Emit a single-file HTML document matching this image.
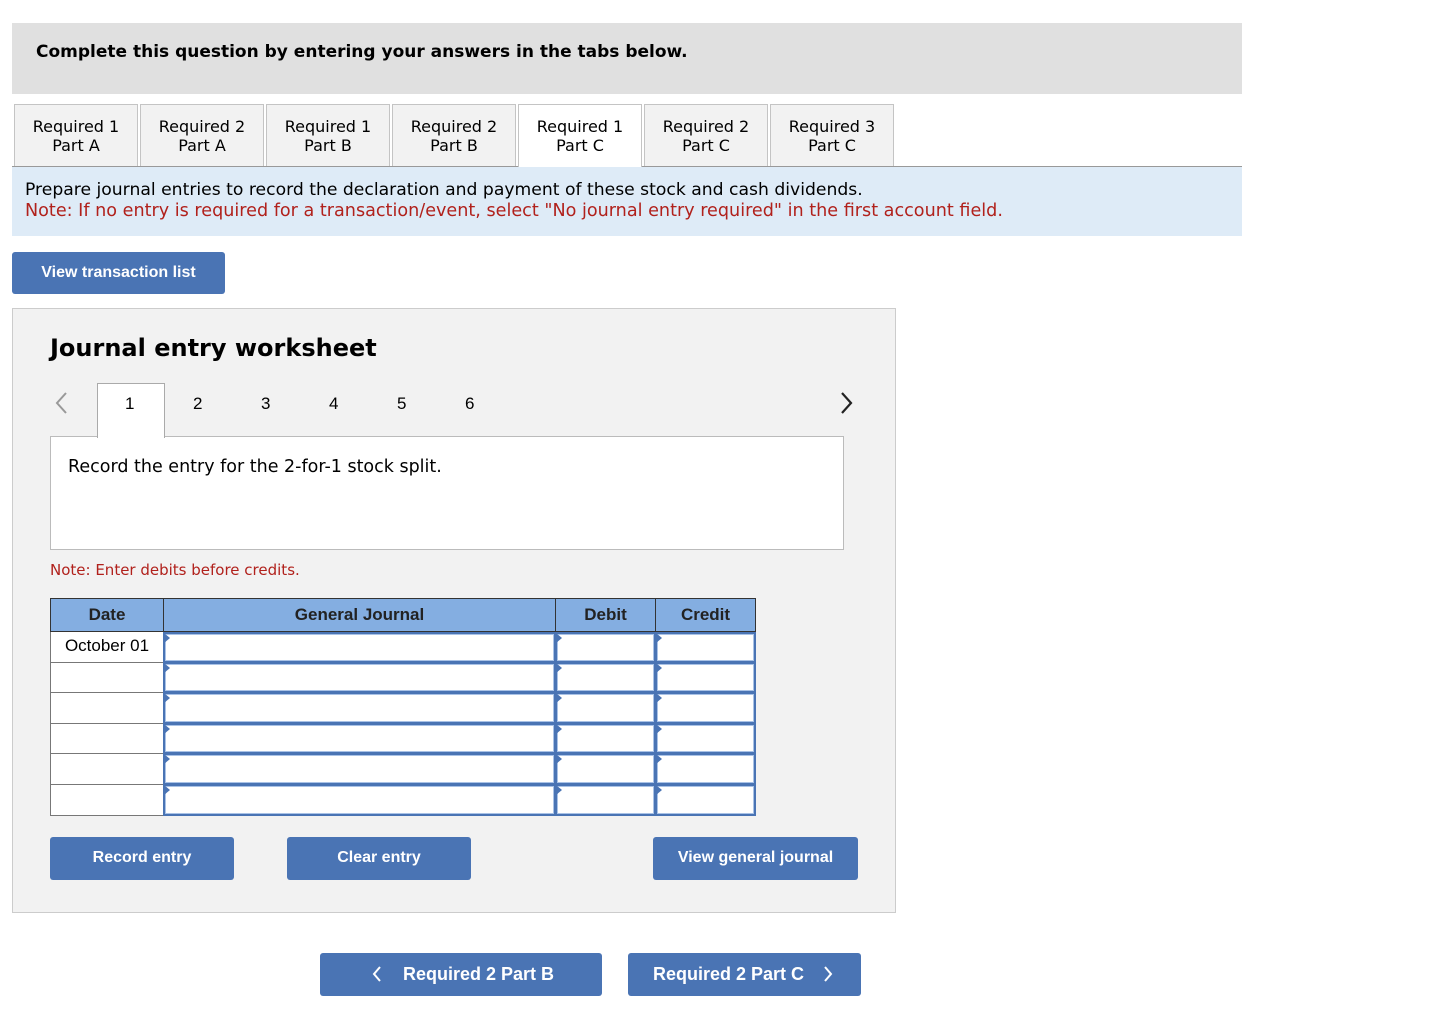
<!DOCTYPE html>
<html><head><meta charset="utf-8"><style>
*{box-sizing:border-box;margin:0;padding:0}
body{width:1440px;height:1020px;background:#fff;position:relative;font-family:"DejaVu Sans",Verdana,sans-serif;color:#000;overflow:hidden}
.a{position:absolute}
.hdr{left:12px;top:23px;width:1230px;height:71px;background:#e0e0e0;font-weight:bold;font-size:17px;padding:19px 0 0 24px}
.tab{top:104px;width:124px;height:62px;background:#f2f2f2;border:1px solid #c4c4c4;border-bottom:none;text-align:center;font-size:16px;line-height:19px;padding-top:12px}
.tab.on{background:#fff;height:63px;z-index:2}
.tabline{left:12px;top:166px;width:1230px;height:1px;background:#999}
.info{left:12px;top:167px;width:1230px;height:69px;background:#deebf7;font-size:17.2px;padding:13px 0 0 13px;line-height:21px}
.red{color:#b1211c}
.btn{background:#4a74b4;color:#fff;font-family:"Liberation Sans",Arial,sans-serif;font-weight:bold;font-size:16px;text-align:center;border-radius:3px}
.ws{left:12px;top:308px;width:884px;height:605px;background:#f2f2f2;border:1px solid #ccc}
.num{top:393px;font-family:"Liberation Sans",Arial,sans-serif;font-size:17px}
.cell{position:absolute;border:2px solid #4a74b4;background:#fff}
.cell:after{content:"";position:absolute;left:0;top:0;right:0;bottom:0;border:1px solid #a9c2e6}
.cell:before{content:"";position:absolute;left:-1px;top:-1px;border-left:6px solid #4a74b4;border-top:5px solid transparent;border-bottom:5px solid transparent;z-index:1}
.th{position:absolute;top:598px;height:34px;background:#84aee1;border:1px solid #333;font-family:"Liberation Sans",Arial,sans-serif;font-weight:bold;font-size:17px;color:#222;text-align:center;line-height:31px}
.dc{position:absolute;left:50px;width:114px;height:31px;background:#fff;border:1px solid #777;border-bottom:none;font-family:"Liberation Sans",Arial,sans-serif;font-size:17px;text-align:center;line-height:28px}
</style></head><body>
<div class="a hdr">Complete this question by entering your answers in the tabs below.</div>
<div class="a tab" style="left:14px">Required 1<br>Part A</div>
<div class="a tab" style="left:140px">Required 2<br>Part A</div>
<div class="a tab" style="left:266px">Required 1<br>Part B</div>
<div class="a tab" style="left:392px">Required 2<br>Part B</div>
<div class="a tab on" style="left:518px">Required 1<br>Part C</div>
<div class="a tab" style="left:644px">Required 2<br>Part C</div>
<div class="a tab" style="left:770px">Required 3<br>Part C</div>
<div class="a tabline"></div>
<div class="a info">Prepare journal entries to record the declaration and payment of these stock and cash dividends.<br><span class="red" style="font-size:17.6px">Note: If no entry is required for a transaction/event, select "No journal entry required" in the first account field.</span></div>
<div class="a btn" style="left:12px;top:252px;width:213px;height:42px;line-height:42px">View transaction list</div>
<div class="a ws"></div>
<div class="a" style="left:50px;top:334px;font-weight:bold;font-size:24px">Journal entry worksheet</div>
<svg class="a" style="left:54px;top:392px" width="14" height="22"><path d="M12 1 L3 11 L12 21" stroke="#999" stroke-width="2" fill="none"/></svg>
<svg class="a" style="left:840px;top:392px" width="14" height="22"><path d="M2 1 L11 11 L2 21" stroke="#222" stroke-width="2.2" fill="none"/></svg>
<div class="a" style="left:50px;top:436px;width:794px;height:114px;background:#fff;border:1px solid #bbb"></div>
<div class="a" style="left:97px;top:383px;width:68px;height:55px;background:#fff;border:1px solid #aaa;border-bottom:none"></div>
<div class="a num" style="left:125px;top:394px">1</div>
<div class="a num" style="left:193px;top:394px">2</div>
<div class="a num" style="left:261px;top:394px">3</div>
<div class="a num" style="left:329px;top:394px">4</div>
<div class="a num" style="left:397px;top:394px">5</div>
<div class="a num" style="left:465px;top:394px">6</div>
<div class="a" style="left:68px;top:457px;font-size:17.5px">Record the entry for the 2-for-1 stock split.</div>
<div class="a red" style="left:50px;top:561px;font-size:15px">Note: Enter debits before credits.</div>
<div class="th" style="left:50px;width:114px">Date</div>
<div class="th" style="left:163px;width:393px">General Journal</div>
<div class="th" style="left:555px;width:101px">Debit</div>
<div class="th" style="left:655px;width:101px">Credit</div>
<div class="dc" style="top:632px;border-top:none">October 01</div>
<div class="dc" style="top:662px"></div>
<div class="dc" style="top:692px"></div>
<div class="dc" style="top:723px"></div>
<div class="dc" style="top:753px"></div>
<div class="dc" style="top:784px;height:32px;border-bottom:1px solid #777"></div>
<div class="cell" style="left:163px;top:632px;width:393px;height:31px"></div>
<div class="cell" style="left:555px;top:632px;width:101px;height:31px"></div>
<div class="cell" style="left:655px;top:632px;width:101px;height:31px"></div>
<div class="cell" style="left:163px;top:662px;width:393px;height:31px"></div>
<div class="cell" style="left:555px;top:662px;width:101px;height:31px"></div>
<div class="cell" style="left:655px;top:662px;width:101px;height:31px"></div>
<div class="cell" style="left:163px;top:692px;width:393px;height:32px"></div>
<div class="cell" style="left:555px;top:692px;width:101px;height:32px"></div>
<div class="cell" style="left:655px;top:692px;width:101px;height:32px"></div>
<div class="cell" style="left:163px;top:723px;width:393px;height:31px"></div>
<div class="cell" style="left:555px;top:723px;width:101px;height:31px"></div>
<div class="cell" style="left:655px;top:723px;width:101px;height:31px"></div>
<div class="cell" style="left:163px;top:753px;width:393px;height:32px"></div>
<div class="cell" style="left:555px;top:753px;width:101px;height:32px"></div>
<div class="cell" style="left:655px;top:753px;width:101px;height:32px"></div>
<div class="cell" style="left:163px;top:784px;width:393px;height:32px"></div>
<div class="cell" style="left:555px;top:784px;width:101px;height:32px"></div>
<div class="cell" style="left:655px;top:784px;width:101px;height:32px"></div>
<div class="a btn" style="left:50px;top:837px;width:184px;height:43px;line-height:42px">Record entry</div>
<div class="a btn" style="left:287px;top:837px;width:184px;height:43px;line-height:42px">Clear entry</div>
<div class="a btn" style="left:653px;top:837px;width:205px;height:43px;line-height:42px">View general journal</div>
<div class="a btn" style="left:320px;top:953px;width:282px;height:43px;line-height:42px;font-size:18px"></div>
<svg class="a" style="left:372px;top:966px" width="10" height="16"><path d="M8 1 L2 8 L8 15" stroke="#fff" stroke-width="2" fill="none"/></svg>
<div class="a btn" style="left:403px;top:953px;height:43px;line-height:42px;font-size:18px;background:none">Required 2 Part B</div>
<div class="a btn" style="left:628px;top:953px;width:233px;height:43px;line-height:42px;font-size:18px"></div>
<div class="a btn" style="left:653px;top:953px;height:43px;line-height:42px;font-size:18px;background:none">Required 2 Part C</div>
<svg class="a" style="left:823px;top:966px" width="10" height="16"><path d="M2 1 L8 8 L2 15" stroke="#fff" stroke-width="2" fill="none"/></svg>
</body></html>
